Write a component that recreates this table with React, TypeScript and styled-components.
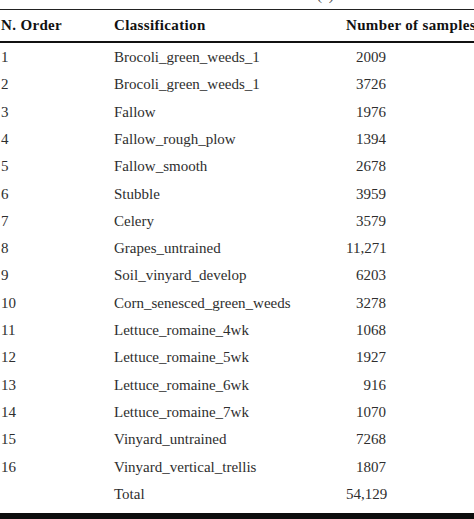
import * as React from "react";
import styled, { createGlobalStyle } from "styled-components";

const rows: [string, string, string][] = [
  ["1", "Brocoli_green_weeds_1", "2009"],
  ["2", "Brocoli_green_weeds_1", "3726"],
  ["3", "Fallow", "1976"],
  ["4", "Fallow_rough_plow", "1394"],
  ["5", "Fallow_smooth", "2678"],
  ["6", "Stubble", "3959"],
  ["7", "Celery", "3579"],
  ["8", "Grapes_untrained", "11,271"],
  ["9", "Soil_vinyard_develop", "6203"],
  ["10", "Corn_senesced_green_weeds", "3278"],
  ["11", "Lettuce_romaine_4wk", "1068"],
  ["12", "Lettuce_romaine_5wk", "1927"],
  ["13", "Lettuce_romaine_6wk", "916"],
  ["14", "Lettuce_romaine_7wk", "1070"],
  ["15", "Vinyard_untrained", "7268"],
  ["16", "Vinyard_vertical_trellis", "1807"],
  ["", "Total", "54,129"],
];

const GlobalStyle = createGlobalStyle`
  html, body {
    margin: 0;
    padding: 0;
    background: #fff;
  }
  body {
    font-family: "Liberation Serif", "Times New Roman", serif;
    color: #2b2b2b;
  }
`;

const Page = styled.div`
  width: 474px;
  height: 519px;
  overflow: hidden;
  display: flex;
  flex-direction: column;
`;

// caption sits mostly above the crop, only the bottom of "(a)" shows
const Caption = styled.div`
  margin-top: -12px;
  height: 22px;
  padding-left: 317px;
  font-size: 15px;
  line-height: 15px;
  color: #555;
  white-space: nowrap;
`;

const Rule = styled.div<{ $h: number; $color?: string }>`
  height: ${(p) => p.$h}px;
  background: ${(p) => p.$color ?? "#1a1a1a"};
  width: 100%;
  flex-shrink: 0;
`;

const Row = styled.div<{ $h: number }>`
  display: grid;
  grid-template-columns: 114px 232px 40px 1fr;
  align-items: center;
  height: ${(p) => p.$h}px;
  font-size: 15px;
  white-space: nowrap;
  flex-shrink: 0;
`;

const Cell = styled.div<{ $bold?: boolean; $right?: boolean; $pad?: number }>`
  font-weight: ${(p) => (p.$bold ? 700 : 400)};
  letter-spacing: ${(p) => (p.$bold ? "0.35px" : "0")};
  text-align: ${(p) => (p.$right ? "right" : "left")};
  padding-left: ${(p) => p.$pad ?? 0}px;
  color: ${(p) => (p.$bold ? "#111" : "#2e2e2e")};
  overflow: visible;
`;

const Body = styled.div`
  padding-top: 1.4px;
  padding-bottom: 5px;
  display: flex;
  flex-direction: column;
`;

export default function App() {
  return (
    <>
      <GlobalStyle />
      <Page>
        <Caption>(a)</Caption>
        <Rule $h={1.3} $color="#222" />
        <Row $h={30.7}>
          <Cell $bold $pad={1}>N. Order</Cell>
          <Cell $bold>Classification</Cell>
          <Cell $bold>Number of samples</Cell>
          <Cell />
        </Row>
        <Rule $h={2} $color="#111" />
        <Body>
          {rows.map(([n, name, count], i) => (
            <Row $h={27.3} key={i}>
              <Cell $pad={1}>{n}</Cell>
              <Cell>{name}</Cell>
              <Cell $right>{count}</Cell>
              <Cell />
            </Row>
          ))}
        </Body>
        <Rule $h={6} $color="#0d0d0d" />
      </Page>
    </>
  );
}
